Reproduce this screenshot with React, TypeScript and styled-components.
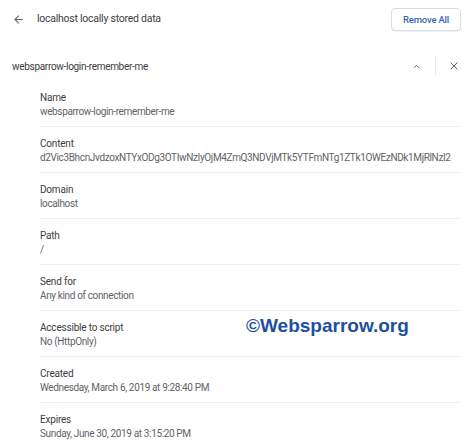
import styled, { createGlobalStyle } from 'styled-components';

const GlobalStyle = createGlobalStyle`
    html, body {
        margin: 0;
        padding: 0;
        background: #ffffff;
    }
    body {
        font-family: Roboto, "Liberation Sans", Arial, sans-serif;
        color: #333333;
    }
`;

const Page = styled.div`
    position: relative;
    width: 474px;
    height: 447px;
    overflow: hidden;
    background: #ffffff;
`;

const Header = styled.div`
    display: flex;
    align-items: center;
    height: 38px;
    padding: 0 13px 0 12px;
`;

const BackButton = styled.div`
    display: flex;
    align-items: center;
    width: 25px;
    color: #5f6368;
`;

const Title = styled.div`
    flex: 1;
    font-size: 10.5px;
    letter-spacing: -0.25px;
    color: #3c4043;
    margin-top: -1px;
`;

const RemoveButton = styled.button`
    height: 23px;
    padding: 0 11px;
    border: 1px solid #dadce0;
    border-radius: 4px;
    background: #ffffff;
    color: #3867b4;
    font-family: Roboto, "Liberation Sans", Arial, sans-serif;
    font-size: 9.5px;
    letter-spacing: -0.2px;
    font-weight: 500;
    box-shadow: 0 1px 1px rgba(0, 0, 0, 0.06);
`;

const CookieRow = styled.div`
    display: flex;
    align-items: center;
    height: 20px;
    margin-top: 18px;
    padding: 0 2px 0 12px;
`;

const CookieName = styled.div`
    flex: 1;
    font-size: 10px;
    letter-spacing: -0.3px;
    color: #3c4043;
`;

const IconButton = styled.div<{ w: number }>`
    display: flex;
    align-items: center;
    justify-content: center;
    width: ${(p) => p.w}px;
    height: 20px;
    color: #5f6368;
`;

const Divider = styled.div`
    width: 1px;
    height: 20px;
    background: #e8eaed;
`;

const Details = styled.div`
    padding: 5px 13px 0 40px;
`;

const Item = styled.div<{ last?: boolean }>`
    padding: 10px 0 7px;
    border-bottom: ${(p) => (p.last ? 'none' : '1px solid #eceef0')};
`;

const Label = styled.div`
    font-size: 10px;
    letter-spacing: -0.2px;
    line-height: 14px;
    color: #3c4043;
`;

const Value = styled.div`
    font-size: 10px;
    letter-spacing: -0.36px;
    line-height: 14px;
    color: #5f6368;
    white-space: nowrap;
`;

const Watermark = styled.div`
    position: absolute;
    left: 246px;
    top: 315px;
    font-family: "Liberation Sans", Arial, sans-serif;
    font-weight: bold;
    font-size: 19px;
    color: #1f4f9f;
`;

const fields = [
    { label: 'Name', value: 'websparrow-login-remember-me' },
    { label: 'Content', value: 'd2Vic3BhcnJvdzoxNTYxODg3OTIwNzIyOjM4ZmQ3NDVjMTk5YTFmNTg1ZTk1OWEzNDk1MjRlNzI2' },
    { label: 'Domain', value: 'localhost' },
    { label: 'Path', value: '/' },
    { label: 'Send for', value: 'Any kind of connection' },
    { label: 'Accessible to script', value: 'No (HttpOnly)' },
    { label: 'Created', value: 'Wednesday, March 6, 2019 at 9:28:40 PM' },
    { label: 'Expires', value: 'Sunday, June 30, 2019 at 3:15:20 PM' },
];

const App = () => {
    return (
        <Page>
            <GlobalStyle />
            <Header>
                <BackButton>
                    <svg width="13" height="13" viewBox="0 0 24 24" fill="currentColor">
                        <path d="M20 11H7.83l5.59-5.59L12 4l-8 8 8 8 1.41-1.41L7.83 13H20v-2z" />
                    </svg>
                </BackButton>
                <Title>localhost locally stored data</Title>
                <RemoveButton>Remove All</RemoveButton>
            </Header>
            <CookieRow>
                <CookieName>websparrow-login-remember-me</CookieName>
                <IconButton w={38}>
                    <svg width="9" height="9" viewBox="0 0 24 24" fill="none" stroke="currentColor" strokeWidth="2.6">
                        <path d="M6 15l6-6 6 6" />
                    </svg>
                </IconButton>
                <Divider />
                <IconButton w={36}>
                    <svg width="10" height="10" viewBox="0 0 24 24" fill="none" stroke="currentColor" strokeWidth="2.4">
                        <path d="M4 4l16 16M20 4L4 20" />
                    </svg>
                </IconButton>
            </CookieRow>
            <Details>
                {fields.map((f, i) => (
                    <Item key={f.label} last={i === fields.length - 1}>
                        <Label>{f.label}</Label>
                        <Value>{f.value}</Value>
                    </Item>
                ))}
            </Details>
            <Watermark>©Websparrow.org</Watermark>
        </Page>
    );
};

export default App;
